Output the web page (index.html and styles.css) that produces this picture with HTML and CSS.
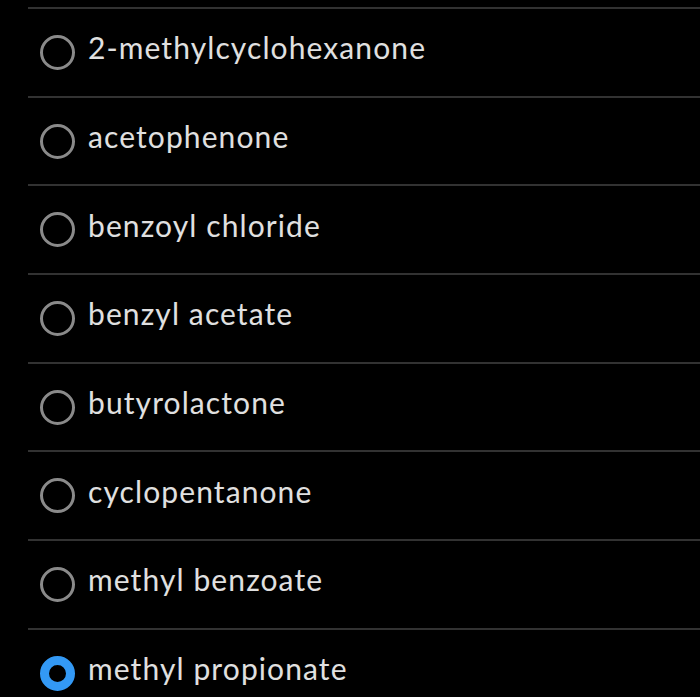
FILE: index.html
```html
<!DOCTYPE html>
<html lang="en">
<head>
<meta charset="utf-8">
<title>Choices</title>
<link rel="stylesheet" href="styles.css">
</head>
<body>
  <div class="choices">
    <label class="choice"><span class="radio"></span><span class="label">2-methylcyclohexanone</span></label>
    <label class="choice"><span class="radio"></span><span class="label">acetophenone</span></label>
    <label class="choice"><span class="radio"></span><span class="label">benzoyl chloride</span></label>
    <label class="choice"><span class="radio"></span><span class="label">benzyl acetate</span></label>
    <label class="choice"><span class="radio"></span><span class="label">butyrolactone</span></label>
    <label class="choice"><span class="radio"></span><span class="label">cyclopentanone</span></label>
    <label class="choice"><span class="radio"></span><span class="label">methyl benzoate</span></label>
    <label class="choice"><span class="radio selected"></span><span class="label">methyl propionate</span></label>
  </div>
</body>
</html>
```
FILE: styles.css
```css
html, body {
  margin: 0;
  padding: 0;
  background: #000;
}

.choices {
  padding-top: 7px;
  display: flex;
  flex-direction: column;
}

.choice {
  display: flex;
  align-items: center;
  gap: 13px;
  height: 88.7px;
  box-sizing: border-box;
  margin-left: 28px;
  padding-left: 12px;
  border-top: 2px solid #323232;
}

.radio {
  width: 35px;
  height: 35px;
  box-sizing: border-box;
  border: 3px solid #8a8a8a;
  border-radius: 50%;
  flex-shrink: 0;
}

.radio.selected {
  border: 9px solid #3399f5;
  background: #000;
}

.label {
  font-family: "Lato", sans-serif;
  font-size: 30px;
  letter-spacing: 1.1px;
  color: #e0e0e0;
  padding-bottom: 10px;
}
```
